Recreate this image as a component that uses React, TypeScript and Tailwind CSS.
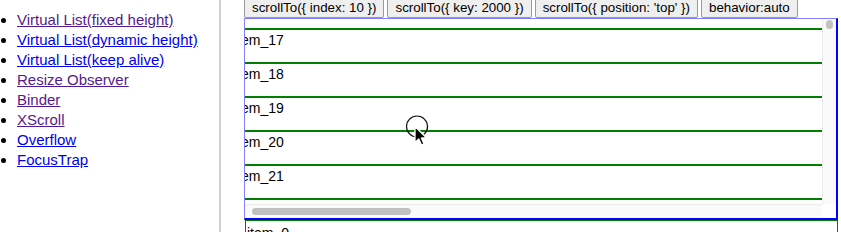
const links = [
  { label: 'Virtual List(fixed height)', visited: true },
  { label: 'Virtual List(dynamic height)', visited: false },
  { label: 'Virtual List(keep alive)', visited: false },
  { label: 'Resize Observer', visited: true },
  { label: 'Binder', visited: true },
  { label: 'XScroll', visited: true },
  { label: 'Overflow', visited: false },
  { label: 'FocusTrap', visited: false },
]

const buttons = [
  'scrollTo({ index: 10 })',
  'scrollTo({ key: 2000 })',
  "scrollTo({ position: 'top' })",
  'behavior:auto',
]

const items = [16, 17, 18, 19, 20, 21]

function Cursor() {
  return (
    <svg
      className="absolute left-[405px] top-[115px] pointer-events-none"
      width="30"
      height="34"
      viewBox="0 0 30 34"
    >
      <circle cx="12" cy="11.5" r="10.5" fill="none" stroke="#111" strokeWidth="1.2" />
      <path
        d="M10 11.5 L10 27.5 L13.8 24 L16.5 30 L19 28.9 L16.4 23 L21.6 23 Z"
        fill="#000"
        stroke="#fff"
        strokeWidth="1.3"
        strokeLinejoin="round"
      />
    </svg>
  )
}

export default function App() {
  return (
    <div className="relative flex h-[232px] w-[841px] overflow-hidden bg-white font-['Liberation_Sans',Arial,sans-serif] text-black">
      {/* sidebar */}
      <div className="w-[221px] shrink-0 border-r-2 border-[#d0d0d0]">
        <ul className="list-disc pl-[17px] pt-[10px] text-[15px] leading-[20px]">
          {links.map((l) => (
            <li key={l.label}>
              <a
                href="#"
                className={`underline ${l.visited ? 'text-[#551a8b]' : 'text-[#0000ee]'}`}
              >
                {l.label}
              </a>
            </li>
          ))}
        </ul>
      </div>

      {/* demo */}
      <div className="ml-[23px] mt-[-3px] w-[594px] shrink-0">
        <div className="flex gap-[3px]">
          {buttons.map((b) => (
            <button
              key={b}
              className="h-[21px] rounded-[2px] border border-[#9a9a9a] bg-[#efefef] px-[7px] text-[13.33px] leading-none text-black"
            >
              {b}
            </button>
          ))}
        </div>

        <div className="flex h-[202px] flex-col border-t border-l border-r-2 border-b-2 border-t-[#8080ff] border-l-[#8080ff] border-r-[#0000ff] border-b-[#0000ff]">
          <div className="flex min-h-0 flex-1">
            <div className="min-w-0 flex-1 overflow-hidden">
              <div className="ml-[-12px] mt-[-23px] w-[2100px]">
                {items.map((n) => (
                  <div
                    key={n}
                    className="h-[34px] border-b-2 border-[#008000] pl-[1px] text-[14px] leading-[20px]"
                  >
                    item_{n}
                  </div>
                ))}
              </div>
            </div>
            <div className="w-[14px] shrink-0 border-l border-[#ececec] bg-[#fafafa] pt-[1px]">
              <div className="ml-[3px] h-[9px] w-[7px] rounded-full bg-[#c1c1c1]" />
            </div>
          </div>
          <div className="flex h-[14px] shrink-0">
            <div className="flex-1 border-t border-[#ececec] bg-[#fafafa] pt-[3px]">
              <div className="ml-[7px] h-[7px] w-[159px] rounded-full bg-[#c1c1c1]" />
            </div>
            <div className="w-[14px] shrink-0 bg-white" />
          </div>
        </div>

        <div className="ml-[1px] h-[40px] border border-[#008000] pl-[1px] pt-[2px] text-[14px] leading-[20px]">
          item_0
        </div>
      </div>

      <Cursor />
    </div>
  )
}
